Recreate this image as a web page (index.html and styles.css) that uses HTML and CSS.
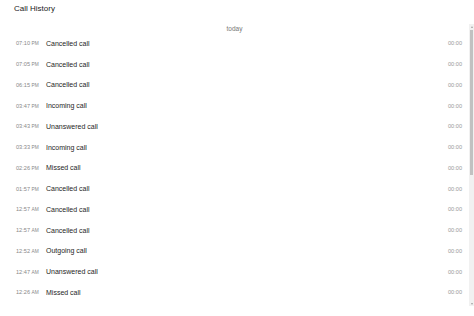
FILE: index.html
```html
<!DOCTYPE html>
<html>
<head>
<meta charset="utf-8">
<link rel="stylesheet" href="styles.css">
</head>
<body>
<div class="page">
  <h1 class="title">Call History</h1>
  <div class="panel">
    <div class="content">
      <div class="day">today</div>
      <ul class="list">
        <li class="row"><span class="time">07:10 <small>PM</small></span><span class="label">Cancelled call</span><span class="dur">00:00</span></li>
        <li class="row"><span class="time">07:05 <small>PM</small></span><span class="label">Cancelled call</span><span class="dur">00:00</span></li>
        <li class="row"><span class="time">06:15 <small>PM</small></span><span class="label">Cancelled call</span><span class="dur">00:00</span></li>
        <li class="row"><span class="time">03:47 <small>PM</small></span><span class="label">Incoming call</span><span class="dur">00:00</span></li>
        <li class="row"><span class="time">03:43 <small>PM</small></span><span class="label">Unanswered call</span><span class="dur">00:00</span></li>
        <li class="row"><span class="time">03:33 <small>PM</small></span><span class="label">Incoming call</span><span class="dur">00:00</span></li>
        <li class="row"><span class="time">02:26 <small>PM</small></span><span class="label">Missed call</span><span class="dur">00:00</span></li>
        <li class="row"><span class="time">01:57 <small>PM</small></span><span class="label">Cancelled call</span><span class="dur">00:00</span></li>
        <li class="row"><span class="time">12:57 <small>AM</small></span><span class="label">Cancelled call</span><span class="dur">00:00</span></li>
        <li class="row"><span class="time">12:57 <small>AM</small></span><span class="label">Cancelled call</span><span class="dur">00:00</span></li>
        <li class="row"><span class="time">12:52 <small>AM</small></span><span class="label">Outgoing call</span><span class="dur">00:00</span></li>
        <li class="row"><span class="time">12:47 <small>AM</small></span><span class="label">Unanswered call</span><span class="dur">00:00</span></li>
        <li class="row"><span class="time">12:26 <small>AM</small></span><span class="label">Missed call</span><span class="dur">00:00</span></li>
      </ul>
    </div>
    <div class="scrollbar">
      <span class="arrow up"></span>
      <div class="track"><div class="thumb"></div></div>
      <span class="arrow down"></span>
    </div>
  </div>
</div>
</body>
</html>
```
FILE: styles.css
```css
html, body {
  margin: 0;
  padding: 0;
  background: #ffffff;
}
body {
  font-family: "Liberation Sans", Arial, sans-serif;
  color: #222;
}
.page {
  width: 474px;
  height: 316px;
  display: flex;
  flex-direction: column;
  overflow: hidden;
}
.title {
  margin: 0;
  padding: 4px 0 0 14px;
  height: 24px;
  box-sizing: border-box;
  font-size: 8px;
  font-weight: normal;
  line-height: 10px;
  color: #222;
}
.panel {
  height: 282px;
  display: flex;
}
.content {
  flex: 1;
  min-width: 0;
}
.day {
  height: 9px;
  line-height: 10px;
  text-align: center;
  font-size: 6.5px;
  color: #777;
}
.list {
  list-style: none;
  margin: 0;
  padding: 0;
}
.row {
  height: 20.75px;
  display: flex;
  align-items: center;
  padding: 0 7px 0 16px;
}
.time {
  width: 30px;
  font-size: 5.6px;
  color: #888;
  white-space: nowrap;
}
.time small {
  font-size: 4.8px;
}
.label {
  flex: 1;
  font-size: 7px;
  color: #1e1e1e;
}
.dur {
  font-size: 5.6px;
  color: #999;
}
.scrollbar {
  width: 5px;
  display: flex;
  flex-direction: column;
  background: #f1f1f1;
}
.arrow {
  height: 5px;
  display: flex;
  align-items: center;
  justify-content: center;
}
.arrow::before {
  content: "";
  width: 0;
  height: 0;
  border-left: 1.5px solid transparent;
  border-right: 1.5px solid transparent;
}
.arrow.up::before {
  border-bottom: 2px solid #a3a3a3;
}
.arrow.down::before {
  border-top: 2px solid #a3a3a3;
}
.track {
  flex: 1;
  padding: 1px 1px 0;
}
.thumb {
  height: 145px;
  background: #c1c1c1;
}
```
